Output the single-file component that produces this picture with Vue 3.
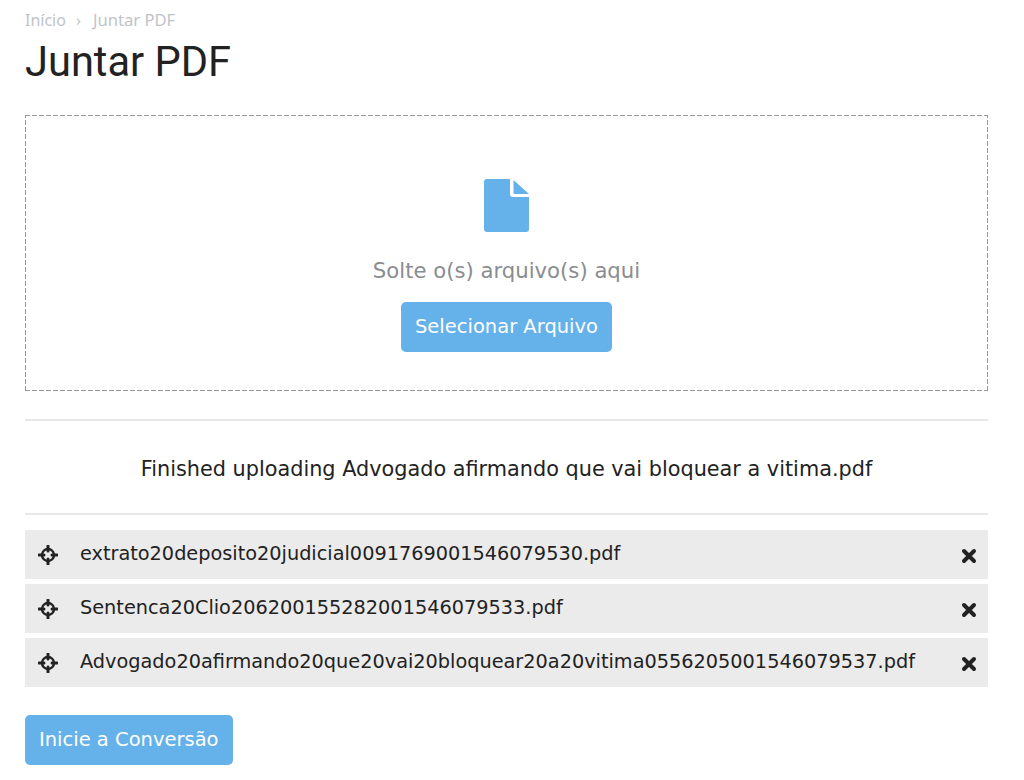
<script setup>
const files = [
  'extrato20deposito20judicial0091769001546079530.pdf',
  'Sentenca20Clio206200155282001546079533.pdf',
  'Advogado20afirmando20que20vai20bloquear20a20vitima0556205001546079537.pdf'
]
</script>

<template>
  <div class="page">
    <div class="breadcrumb">
      <span>Início</span>
      <span class="sep">›</span>
      <span>Juntar PDF</span>
    </div>
    <h1 class="title">Juntar PDF</h1>

    <!-- Area de upload -->
    <div class="dropzone">
      <svg class="file-icon" viewBox="0 0 45 53" width="45" height="53">
        <path d="M3 0H26V15a3 3 0 0 0 3 3H45V50a3 3 0 0 1-3 3H3a3 3 0 0 1-3-3V3a3 3 0 0 1 3-3Z" fill="#65b1ea" />
        <path d="M29.5 1L45 15H30.5a1 1 0 0 1-1-1Z" fill="#65b1ea" />
      </svg>
      <p class="drop-text">Solte o(s) arquivo(s) aqui</p>
      <button class="btn">Selecionar Arquivo</button>
    </div>

    <div class="status">Finished uploading Advogado afirmando que vai bloquear a vitima.pdf</div>

    <!-- Lista de arquivos -->
    <ul class="file-list">
      <li v-for="file in files" :key="file" class="file-row">
        <svg class="move-icon" viewBox="0 0 20 20" width="20" height="20">
          <circle cx="10" cy="10" r="6" fill="none" stroke="#222" stroke-width="2.4" />
          <path d="M10 1v5M10 14v5M1 10h5M14 10h5" fill="none" stroke="#222" stroke-width="3" stroke-linecap="round" />
        </svg>
        <span class="file-name">{{ file }}</span>
        <svg class="remove-icon" viewBox="0 0 16 16" width="16" height="16">
          <path d="M3 3L13 13M13 3L3 13" stroke="#222" stroke-width="4" stroke-linecap="round" />
        </svg>
      </li>
    </ul>

    <button class="btn start">Inicie a Conversão</button>
  </div>
</template>

<style>
body {
  background: #fff;
}
</style>

<style scoped>
.page {
  padding: 10px 36px 0 25px;
  font-family: "DejaVu Sans", sans-serif;
  color: #222;
}

.breadcrumb {
  display: flex;
  gap: 10px;
  font-family: "Noto Sans", sans-serif;
  font-size: 16px;
  line-height: 20px;
  color: #c0c4c8;
}

.sep + span {
  font-size: 16.6px;
  margin-left: 2px;
}

.title {
  margin: 6px 0 0;
  font-family: Roboto, sans-serif;
  font-size: 41.6px;
  font-weight: 400;
  line-height: 52px;
  color: #222;
}

.dropzone {
  margin-top: 27px;
  height: 276px;
  box-sizing: border-box;
  display: flex;
  flex-direction: column;
  align-items: center;
  padding-top: 64px;
  /* dashes of 5px every 7px, drawn by hand to get the long dash */
  background-image:
    repeating-linear-gradient(90deg, #999 0 5px, transparent 5px 7px),
    repeating-linear-gradient(90deg, #999 0 5px, transparent 5px 7px),
    repeating-linear-gradient(0deg, #999 0 5px, transparent 5px 7px),
    repeating-linear-gradient(0deg, #999 0 5px, transparent 5px 7px);
  background-size: 100% 1px, 100% 1px, 1px 100%, 1px 100%;
  background-position: 0 0, 0 100%, 0 0, 100% 0;
  background-repeat: no-repeat;
}

.file-icon {
  display: block;
}

.drop-text {
  margin: 26px 0 0;
  font-size: 21.2px;
  line-height: 26px;
  color: #8a8d90;
}

.btn {
  display: block;
  border: 0;
  border-radius: 5px;
  background: #65b1ea;
  color: #fff;
  font-family: "DejaVu Sans", sans-serif;
  font-size: 19.5px;
  height: 50px;
  padding: 0 14px 2px;
  cursor: pointer;
}

.dropzone .btn {
  margin-top: 18px;
}

.status {
  margin-top: 28px;
  border-top: 2px solid #e8e8e8;
  border-bottom: 2px solid #e8e8e8;
  height: 96px;
  box-sizing: border-box;
  display: flex;
  align-items: center;
  justify-content: center;
  padding-top: 4px;
  font-size: 20.8px;
}

.file-list {
  list-style: none;
  margin: 15px 0 0;
  padding: 0;
  display: flex;
  flex-direction: column;
  gap: 5px;
}

.file-row {
  height: 49px;
  background: #ebebeb;
  display: flex;
  align-items: center;
  padding: 0 11px 0 13px;
  font-size: 19.3px;
}

.file-name {
  flex: 1;
  margin-left: 22px;
  margin-top: -2px;
}

.move-icon {
  flex: none;
}

.remove-icon {
  flex: none;
  margin-top: 2px;
}

.start {
  margin-top: 28px;
}
</style>
